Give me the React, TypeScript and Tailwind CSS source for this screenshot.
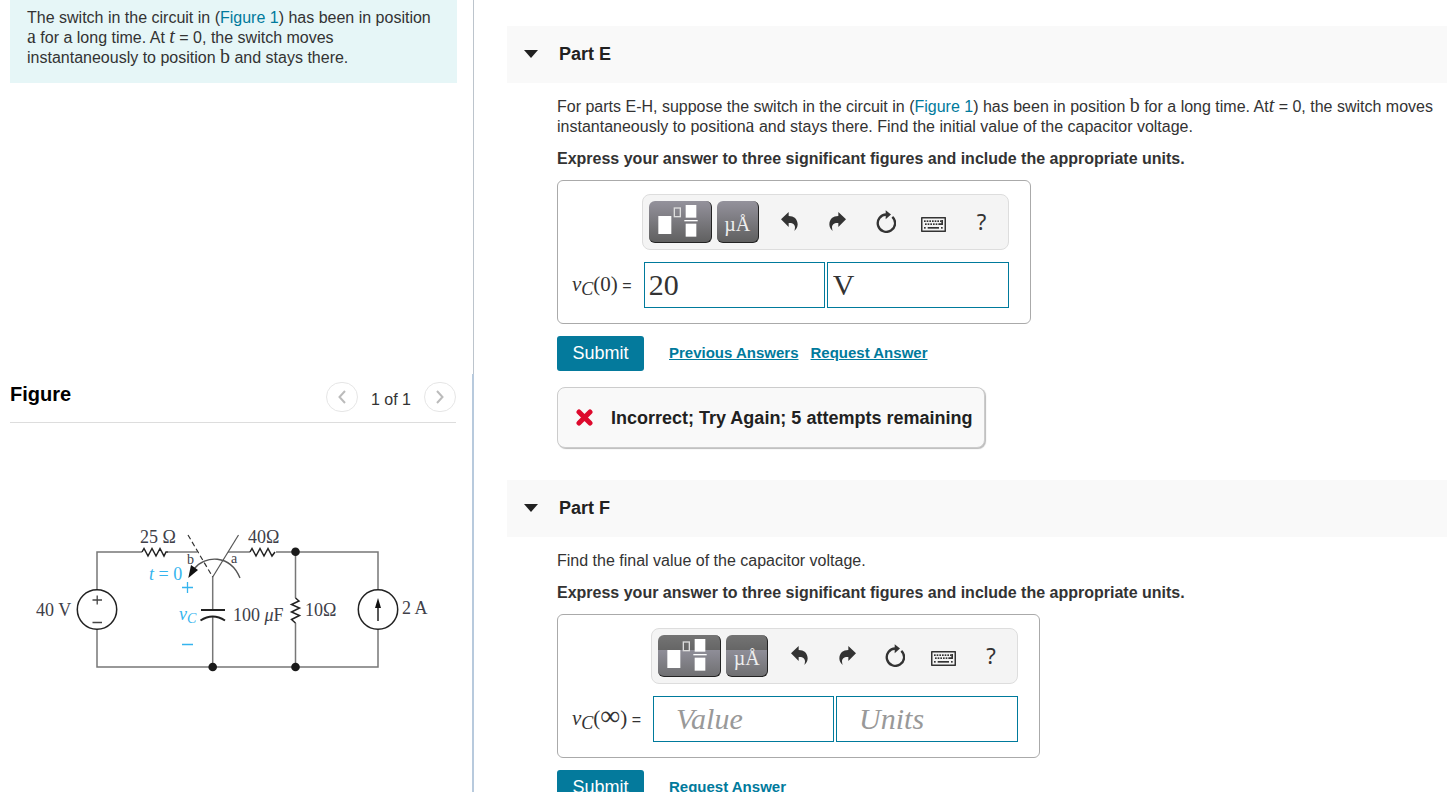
import { useState, type ReactNode } from 'react';
import clsx from 'clsx';

function UndoIcon({ flip = false }: { flip?: boolean }) {
  return (
    <svg viewBox="0 0 51 57" className={clsx('w-[17px] h-[19px]', flip && '-scale-x-100')} fill="#333" aria-hidden="true">
      <path d="M23 0 L0 22 L23 45 V33 C36 32 42 38 42 46 C42 50 41 54 40 57 C46 52 50 45 50 37 C49 20 39 12 23 12 Z" />
    </svg>
  );
}

function ResetIcon() {
  return (
    <svg viewBox="0 0 60 68" className="w-[20px] h-[23px]" aria-hidden="true">
      <path d="M49 20 A26 26 0 1 1 31 13" fill="none" stroke="#333" strokeWidth="7" />
      <path d="M29 0 L45 13 L29 27 Z" fill="#333" />
    </svg>
  );
}

function KeyboardIcon() {
  return (
    <svg viewBox="0 0 75 45" className="w-[25px] h-[15px]" fill="#333" aria-hidden="true">
      <rect x="2" y="2" width="71" height="41" rx="2" fill="none" stroke="#333" strokeWidth="5" />
      {[9, 17, 25, 33, 41, 49, 57].map(x => <rect key={x} x={x} y="10" width="5" height="5" />)}
      {[12, 20, 28, 36, 44, 52].map(x => <rect key={x} x={x} y="19" width="5" height="5" />)}
      <path d="M61 9 H66 V24 H56 V19 H61 Z" />
      <rect x="9" y="30" width="5" height="5" />
      <rect x="20" y="30" width="34" height="5" />
      <rect x="60" y="30" width="5" height="5" />
    </svg>
  );
}

function TemplateIcon() {
  return (
    <svg viewBox="0 0 120 96" className="w-10 h-8" aria-hidden="true">
      <rect x="1" y="33" width="39" height="54" fill="#fff" />
      <rect x="49" y="9" width="18" height="26" fill="none" stroke="#ddd" strokeWidth="4" />
      <rect x="83" y="0" width="32" height="38" fill="#fff" />
      <rect x="79" y="45" width="40" height="4" fill="#fff" />
      <rect x="83" y="56" width="32" height="39" fill="#fff" />
    </svg>
  );
}

function Caret() {
  return (
    <svg viewBox="0 0 14 8" className="w-[14px] h-2" fill="#212121" aria-hidden="true">
      <path d="M0 0 H14 L7 8 Z" />
    </svg>
  );
}

function CircuitFigure() {
  const wire = { fill: 'none', stroke: '#777', strokeWidth: 1.5 };
  const part = { fill: 'none', stroke: '#222', strokeWidth: 1.5 };
  return (
    <svg
      viewBox="30 525 405 155"
      className="block w-[405px] h-[155px] font-['Liberation_Serif',serif] text-lg"
      role="img"
      aria-label="Circuit diagram"
    >
      <g {...wire}>
        <path d="M97 590 V552 H142" />
        <path d="M168 552 H197" />
        <path d="M97 629 V667 H378 V629" />
        <path d="M228 552 H250" />
        <path d="M276 552 H378 V590" />
        <path d="M295.5 552 V598" />
        <path d="M295.5 623 V667" />
        <path d="M212.7 577 V610" />
        <path d="M212.7 617 V667" />
      </g>
      <g {...part}>
        <path d="M142 552 L144 548.5 L148 556 L152 548.5 L156 556 L160 548.5 L164 556 L166 552 H168" />
        <path d="M250 552 L252 548.5 L256 556 L260 548.5 L264 556 L268 548.5 L272 556 L275 552" />
        <path d="M295.5 598 L299 601 L291.5 604.5 L299.5 608 L291.5 612 L299.5 615.5 L291.5 619.5 L295.5 623" />
        <circle cx="97" cy="609.5" r="19.7" />
        <circle cx="378" cy="609.5" r="19.7" />
        <path d="M201 610 H225" strokeWidth="2" />
        <path d="M200.5 620.5 Q212.7 612.5 225 620.5" strokeWidth="2" />
        <path d="M378 621 V605" />
      </g>
      <path d="M212.7 577 L238.5 535" fill="none" stroke="#555" strokeWidth="1.2" />
      <path d="M188 535 L212.7 577" fill="none" stroke="#333" strokeWidth="1.2" strokeDasharray="5 3" />
      <path d="M194 569 C205 555 230 554 240 578" fill="none" stroke="#555" strokeWidth="1.3" />
      <path d="M188.3 578 L191 565 L198 570 Z" fill="#111" />
      <path d="M378 598 L381 608 H375 Z" fill="#111" />
      <g fill="#1a1a1a">
        <circle cx="212.7" cy="667" r="4.3" />
        <circle cx="295.5" cy="551.7" r="4.3" />
        <circle cx="295.5" cy="667" r="4.3" />
      </g>
      <g stroke="#444" strokeWidth="1.3">
        <path d="M92.5 600 H102 M97.2 595.5 V604.5 M92.5 622.5 H102" />
      </g>
      <g stroke="#35b4ee" strokeWidth="1.3">
        <path d="M182 587.5 H193 M187.5 582 V593 M182 644.5 H193" />
      </g>
      <g fill="#404048">
        <text x="36" y="616">40 V</text>
        <text x="140" y="543">25 Ω</text>
        <text x="248" y="543">40Ω</text>
        <text x="187" y="564" fontSize="14">b</text>
        <text x="231" y="563" fontSize="14">a</text>
        <text x="233" y="621">100 <tspan fontStyle="italic">μ</tspan>F</text>
        <text x="305" y="616">10Ω</text>
        <text x="402" y="614">2 A</text>
      </g>
      <g fill="#35b4ee">
        <text x="149" y="580"><tspan fontStyle="italic">t</tspan> = 0</text>
        <text x="179" y="620" fontStyle="italic">v<tspan fontSize="14" dy="3">C</tspan></text>
      </g>
    </svg>
  );
}

function MathText({ italic = false, children }: { italic?: boolean; children: ReactNode }) {
  return (
    <span className={clsx("font-['Liberation_Serif',serif] text-xl leading-[0]", italic && 'italic')}>{children}</span>
  );
}

function FigureLink() {
  return <a href="#figure" className="text-[#007a9c]">Figure 1</a>;
}

function PartHeader({ title }: { title: string }) {
  return (
    <h2 className="bg-[#f9f9f9] text-lg font-bold text-[#212121]">
      <button className="flex h-[57px] w-full items-center pl-[17px] pb-[2px]">
        <Caret />
        <span className="ml-[21px]">{title}</span>
      </button>
    </h2>
  );
}

function Toolbar({ split = false }: { split?: boolean }) {
  const dark = clsx(
    'flex h-[42px] items-center justify-center rounded-md border-r border-b border-[#222]',
    split
      ? 'bg-[linear-gradient(#747474,#666_36%,#8f8e98_36%,#707072)]'
      : 'bg-[linear-gradient(#94929c,#606060)]'
  );
  const plain = 'flex h-[42px] w-12 items-center justify-center';
  return (
    <div className="-ml-[2px] flex h-14 items-center rounded-lg border border-[#ddd] bg-[#f4f4f4] pl-[6px] pr-[2px]">
      <button title="Templates" className={clsx(dark, 'mr-[5px] w-[63px] pr-1 pb-[2px]')}><TemplateIcon /></button>
      <button title="Symbols" className={clsx(dark, "mr-[7px] w-[42px] pt-1 font-['Liberation_Serif',serif] text-xl text-[#eee]")}>µÅ</button>
      <button title="Undo" className={clsx(plain, 'pb-[2px]')}><UndoIcon /></button>
      <button title="Redo" className={clsx(plain, 'pb-[2px]')}><UndoIcon flip /></button>
      <button title="Reset" className={clsx(plain, 'pb-[2px]')}><ResetIcon /></button>
      <button title="Keyboard shortcuts" className={clsx(plain, 'pt-1')}><KeyboardIcon /></button>
      <button title="Help" className={clsx(plain, "pb-[2px] font-['Noto_Sans',sans-serif] text-[22px] text-[#333]")}>?</button>
    </div>
  );
}

type AnswerBoxProps = {
  id: string;
  arg: ReactNode;
  value?: string;
  units?: string;
};

function AnswerBox({ id, arg, value = '', units = '' }: AnswerBoxProps) {
  const [val, setVal] = useState(value);
  const [unit, setUnit] = useState(units);
  const field =
    "h-[46px] min-w-0 border border-[#007a9c] font-['Liberation_Serif',serif] text-3xl text-[#333] outline-none placeholder:italic placeholder:text-[#999]";
  return (
    <div className="grid w-max grid-cols-[auto_365px] gap-x-3 gap-y-3 rounded-md border border-[#aaa] pt-[13px] pr-[21px] pb-[15px] pl-[14px]">
      <div className="col-start-2">
        <Toolbar split={!value} />
      </div>
      <label htmlFor={id} className="self-center text-[#333]">
        <span className="font-['Liberation_Serif',serif] text-[21px] leading-none">
          <i>v</i>
          <sub className="bottom-[-4px] text-lg leading-none italic">C</sub>({arg})
        </span>{' '}
        =
      </label>
      <div className="grid grid-cols-[181px_182px] gap-[2px]">
        <input
          id={id}
          className={clsx(field, val ? 'pl-1' : 'pl-[22px]')}
          placeholder="Value"
          value={val}
          onChange={e => setVal(e.target.value)}
        />
        <input
          aria-label="Units"
          className={clsx(field, unit ? 'pl-[5px]' : 'pl-[22px]')}
          placeholder="Units"
          value={unit}
          onChange={e => setUnit(e.target.value)}
        />
      </div>
    </div>
  );
}

function Actions({ links }: { links: { label: string; underline: boolean }[] }) {
  return (
    <div className="mt-3 flex items-center">
      <button className="mr-[25px] h-[35px] w-[87px] rounded-[3px] bg-[#047a9c] pb-[2px] text-lg text-white">Submit</button>
      <div className="flex gap-3 pb-[2px] text-[15px] font-bold text-[#007a9c]">
        {links.map(link => (
          <a key={link.label} href="#answers" className={clsx(link.underline && 'underline')}>{link.label}</a>
        ))}
      </div>
    </div>
  );
}

export default function App() {
  return (
    <div className="flex h-screen overflow-hidden bg-white font-['Liberation_Sans',Arial,sans-serif] text-base leading-5 text-[#333]">
      <aside className="flex w-[474px] shrink-0 flex-col">
        <section className="h-[374px] border-r border-[#bcc4cc] pr-4 pl-[10px]">
          <p className="bg-[#e6f6f7] pt-2 pr-4 pb-[15px] pl-[17px]">
            The switch in the circuit in (<FigureLink />) has been in position <MathText>a</MathText> for a long time. At{' '}
            <MathText italic>t</MathText> = 0, the switch moves instantaneously to position <MathText>b</MathText> and stays there.
          </p>
        </section>

        <section id="figure" className="flex-1 border-r-2 border-[#b8cadd] pr-4 pl-[10px]">
          <div className="flex h-[49px] items-center border-b border-[#ddd] pb-[2px]">
            <h2 className="flex-1 pb-[6px] text-xl font-bold text-black">Figure</h2>
            <button title="Previous figure" className="flex h-[30px] w-8 items-center justify-center rounded-full border border-[#e6e6e6]">
              <svg viewBox="0 0 8 14" className="h-[14px] w-2" fill="none" stroke="#bbb" strokeWidth="2" aria-hidden="true"><path d="M7 1 L1.5 7 L7 13" /></svg>
            </button>
            <span className="mx-[13px] pt-[6px]">1 of 1</span>
            <button title="Next figure" className="flex h-[30px] w-8 items-center justify-center rounded-full border border-[#e6e6e6]">
              <svg viewBox="0 0 8 14" className="h-[14px] w-2" fill="none" stroke="#bbb" strokeWidth="2" aria-hidden="true"><path d="M1 1 L6.5 7 L1 13" /></svg>
            </button>
          </div>
          <div className="pt-[102px] pl-5">
            <CircuitFigure />
          </div>
        </section>
      </aside>

      <main className="min-w-0 flex-1 overflow-hidden pt-[26px] pl-[33px]">
        <div className="min-w-[950px]">
          <PartHeader title="Part E" />
          <div className="pt-[14px] pb-8 pl-[50px]">
            <p>
              For parts E-H, suppose the switch in the circuit in (<FigureLink />) has been in position <MathText>b</MathText> for a
              long time. At<MathText italic>t</MathText> = 0, the switch moves instantaneously to position<MathText>a</MathText> and
              stays there. Find the initial value of the capacitor voltage.
            </p>
            <p className="mt-3 mb-[11px] font-bold">Express your answer to three significant figures and include the appropriate units.</p>
            <AnswerBox id="vc-initial" arg="0" value="20" units="V" />
            <Actions links={[{ label: 'Previous Answers', underline: true }, { label: 'Request Answer', underline: true }]} />
            <div className="mt-4 flex h-[61px] w-max items-center rounded-lg border border-[#ccc] bg-[#f9f9f9] pr-3 pl-[18px] text-lg font-bold text-[#212121] shadow-[1px_1px_1px_#bbb]">
              <svg viewBox="0 0 17 17" className="mr-[18px] h-[17px] w-[17px]" aria-hidden="true">
                <path d="M3 3 L14 14 M14 3 L3 14" stroke="#dd0a2d" strokeWidth="5" strokeLinecap="round" />
              </svg>
              Incorrect; Try Again; 5 attempts remaining
            </div>
          </div>

          <PartHeader title="Part F" />
          <div className="pt-[14px] pl-[50px]">
            <p>Find the final value of the capacitor voltage.</p>
            <p className="mt-3 mb-[11px] font-bold">Express your answer to three significant figures and include the appropriate units.</p>
            <AnswerBox id="vc-final" arg={<span className="text-[28px] leading-[0]">∞</span>} />
            <Actions links={[{ label: 'Request Answer', underline: false }]} />
          </div>
        </div>
      </main>
    </div>
  );
}
